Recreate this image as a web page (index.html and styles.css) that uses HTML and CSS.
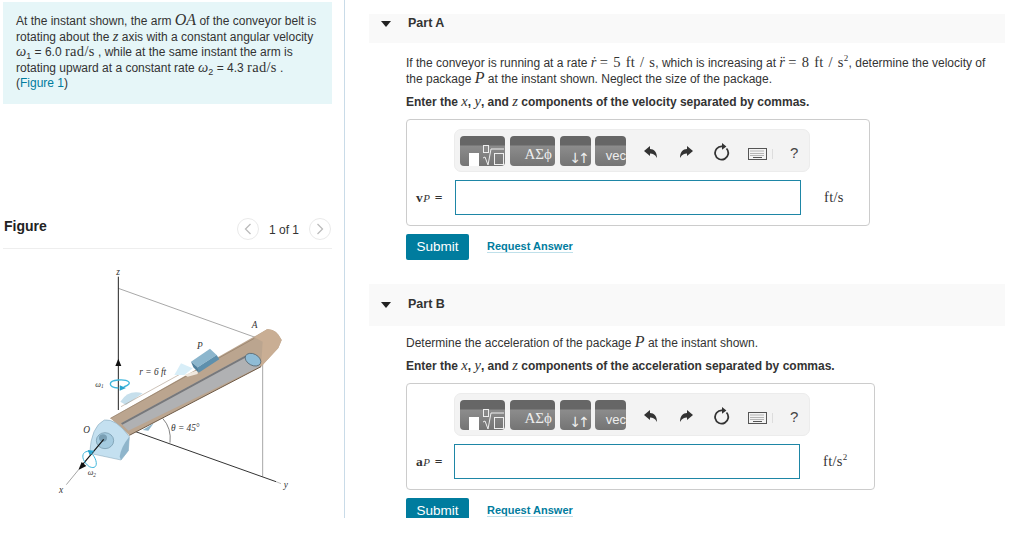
FILE: index.html
```html
<!DOCTYPE html>
<html lang="en">
<head>
    <meta charset="UTF-8">
    <title>Conveyor belt problem</title>
    <link rel="stylesheet" href="styles.css">
</head>
<body>
    <div class="page">
        <div class="left-col">
            <div class="intro">
                At the instant shown, the arm <span class="mi big">OA</span> of the conveyor belt is<br>
                rotating about the <span class="mi">z</span> axis with a constant angular velocity<br>
                <span class="mi">ω</span><sub>1</sub> = 6.0 <span class="mt">rad/s</span> , while at the same instant the arm is<br>
                rotating upward at a constant rate <span class="mi">ω</span><sub>2</sub> = 4.3 <span class="mt">rad/s</span> .<br>
                (<a class="fig-link" href="#">Figure 1</a>)
            </div>
            <div class="figure-head">
                <span class="figure-title">Figure</span>
                <div class="pager">
                    <span class="pager-btn">
                        <svg width="8" height="12" viewBox="0 0 8 12"><path d="M6.5 1 L1.5 6 L6.5 11" fill="none" stroke="#bbb" stroke-width="1.3"/></svg>
                    </span>
                    <span class="pager-text">1 of 1</span>
                    <span class="pager-btn">
                        <svg width="8" height="12" viewBox="0 0 8 12"><path d="M1.5 1 L6.5 6 L1.5 11" fill="none" stroke="#bbb" stroke-width="1.3"/></svg>
                    </span>
                </div>
            </div>
            <svg class="figure-img" width="270" height="240" viewBox="0 0 810 720">
                <!-- axes -->
                <path d="M232 85 L665 240 L665 650" fill="none" stroke="#a8a8a8" stroke-width="3"/>
                <path d="M232 50 V450" stroke="#222" stroke-width="3"/>
                <path d="M232 296 L223 318 H241 Z" fill="#111"/>
                <path d="M270 510 L705 665" stroke="#333" stroke-width="3"/>
                <path d="M705 665 L720 671" stroke="#999" stroke-width="2"/>
                <path d="M365 475 Q392 505 387 548" fill="none" stroke="#444" stroke-width="2"/>
                <!-- blue mounts behind the belt -->
                <path d="M238 425 Q262 388 305 400 L255 435 Z" fill="#c6dfec"/>
                <path d="M305 510 L338 490 L322 512 Z" fill="#8fb6cb"/>
                <!-- belt -->
                <path d="M208 475 L678 208 Q705 205 722 240 L712 264 L660 320 L265 526 Z" fill="#bba58f"/>
                <path d="M640 232 L678 208 Q705 205 722 240 L712 264 L660 320 L665 245 Z" fill="#c9ae94"/>
                <path d="M240 490 L612 287 L660 318 L262 512 Z" fill="#b0b1b3"/>
                <path d="M240 490 L612 287 L617 291 L244 494 Z" fill="#77787b"/>
                <path d="M208 475 L640 235" stroke="#8f7a65" stroke-width="2"/>
                <path d="M265 526 L660 320" stroke="#6e5a47" stroke-width="3"/>
                <path d="M240 440 L440 330" stroke="#9a8570" stroke-width="1.5"/>
                <ellipse cx="636" cy="299" rx="25" ry="17" transform="rotate(28 636 299)" fill="#8fbcd6" stroke="#4b5a63" stroke-width="2"/>
                <!-- package -->
                <path d="M420 310 L455 325 L430 345 L400 345 Z" fill="#d8eef8"/>
                <path d="M430 345 L470 330 L470 342 L440 350 Z" fill="#efe8df"/>
                <path d="M450 305 L507 266 L527 285 L470 322 Z" fill="#8cb6cd"/>
                <path d="M470 322 L527 285 L535 298 L473 338 Z" fill="#5e90ad"/>
                <path d="M450 305 L470 322 L473 338 L457 322 Z" fill="#4f7f9c"/>
                <!-- front bearing -->
                <path d="M146 580 Q150 500 190 480 Q225 475 265 530 L262 572 L240 600 Z" fill="#c4e0f0" stroke="#7d9fb2" stroke-width="1.5"/>
                <path d="M240 600 L262 572 L265 530 Q240 560 236 590 Z" fill="#8fb5cb"/>
                <ellipse cx="192" cy="542" rx="26" ry="24" fill="#a5cbe0" stroke="#6d8fa3" stroke-width="2"/>
                <ellipse cx="186" cy="534" rx="12" ry="11" fill="#7a9fb4"/>
                <!-- x axis -->
                <path d="M188 538 L122 617" stroke="#111" stroke-width="3.5"/>
                <path d="M112 630 L122 606 L136 618 Z" fill="#111"/>
                <path d="M112 630 L76 674" stroke="#777" stroke-width="2"/>
                <!-- rotation arrows -->
                <path d="M248 381 C280 370 262 358 232 360 C200 362 200 382 232 384" fill="none" stroke="#3fb6dc" stroke-width="4"/>
                <path d="M255 384 L236 376 V392 Z" fill="#2aa5cf"/>
                <path d="M145 574 C120 572 118 600 145 620 C172 632 172 600 150 578" fill="none" stroke="#3fb6dc" stroke-width="3"/>
                <path d="M160 572 L140 570 L146 586 Z" fill="#2aa5cf"/>
                <!-- labels -->
                <text class="fig-label" x="226" y="46">z</text>
                <text class="fig-label" x="632" y="204">A</text>
                <text class="fig-label" x="468" y="268">P</text>
                <text class="fig-label" x="295" y="345">r = 6 ft</text>
                <text class="fig-label" x="390" y="514">θ = 45°</text>
                <text class="fig-label fig-small" x="163" y="380">ω<tspan class="fig-sub" dy="5">1</tspan></text>
                <text class="fig-label fig-small" x="140" y="646">ω<tspan class="fig-sub" dy="5">2</tspan></text>
                <text class="fig-label" x="127" y="518">O</text>
                <text class="fig-label" x="54" y="698">x</text>
                <text class="fig-label" x="728" y="684">y</text>
            </svg>
        </div>

        <div class="right-col">
            <div class="part-bar part-bar-a">
                <span class="caret"></span>
                <span class="part-title">Part A</span>
            </div>
            <p class="part-text part-text-a">
                If the conveyor is running at a rate <span class="mi">ṙ</span> <span class="mt eq">= 5 ft / s</span>, which is increasing at <span class="mi">r̈</span> <span class="mt eq">= 8 ft / s<sup>2</sup></span>, determine the velocity of<br>
                the package <span class="mi big">P</span> at the instant shown. Neglect the size of the package.
            </p>
            <p class="part-text part-bold">
                Enter the <span class="mi normal">x</span>, <span class="mi normal">y</span>, and <span class="mi normal">z</span> components of the velocity separated by commas.
            </p>
            <div class="answer-box">
                <div class="toolbar">
                    <span class="tool-btn tool-math">
                        <span class="white-box"></span>
                        <svg width="24" height="21" viewBox="0 0 24 21"><path d="M2 13 L4 12 L7 20 L10 4 H23" fill="none" stroke="#eee" stroke-width="1"/><rect x="2.5" y="0.5" width="5" height="7" fill="none" stroke="#eee"/><rect x="13.5" y="8.5" width="9" height="11" fill="none" stroke="#eee"/></svg>
                    </span>
                    <span class="tool-btn tool-greek">ΑΣϕ</span>
                    <span class="tool-btn tool-arrows">↓↑</span>
                    <span class="tool-btn tool-vec">vec</span>
                    <svg class="tool-icon icon-undo" width="16" height="16" viewBox="0 0 16 16"><path d="M1 7 L7 2 V5 C11 5 14 8 14 14 C12 10.5 10 9.5 7 9.5 V12 Z" fill="#333"/></svg>
                    <svg class="tool-icon icon-redo" width="16" height="16" viewBox="0 0 16 16"><path d="M15 7 L9 2 V5 C5 5 2 8 2 14 C4 10.5 6 9.5 9 9.5 V12 Z" fill="#333"/></svg>
                    <svg class="tool-icon icon-reload" width="18" height="18" viewBox="0 0 18 18"><path d="M13.5 5.5 A6.6 6.6 0 1 1 9 3.4" fill="none" stroke="#333" stroke-width="1.8"/><path d="M9 0 L13.4 3.4 L9 6.8 Z" fill="#333"/></svg>
                    <svg class="tool-icon icon-keys" width="19" height="12" viewBox="0 0 19 12"><rect x="0.5" y="0.5" width="18" height="11" fill="#f3f3f3" stroke="#555"/><path d="M2.5 3 H16.5 M2.5 5.5 H16.5 M2.5 7.5 H16.5" stroke="#777" stroke-dasharray="1 1"/><path d="M5 9.5 H14" stroke="#555"/></svg>
                    <span class="tool-sep"></span>
                    <span class="tool-help">?</span>
                </div>
                <div class="answer-row">
                    <span class="answer-label"><b>v</b><i>P</i> <b>=</b></span>
                    <span class="answer-input"></span>
                    <span class="answer-unit">ft/s</span>
                </div>
            </div>
            <div class="actions">
                <span class="submit-btn">Submit</span>
                <a class="request-link" href="#">Request Answer</a>
            </div>

            <div class="part-bar part-bar-b">
                <span class="caret"></span>
                <span class="part-title">Part B</span>
            </div>
            <p class="part-text part-text-b">
                Determine the acceleration of the package <span class="mi big">P</span> at the instant shown.
            </p>
            <p class="part-text part-bold part-bold-b">
                Enter the <span class="mi normal">x</span>, <span class="mi normal">y</span>, and <span class="mi normal">z</span> components of the acceleration separated by commas.
            </p>
            <div class="answer-box answer-box-b">
                <div class="toolbar">
                    <span class="tool-btn tool-math">
                        <span class="white-box"></span>
                        <svg width="24" height="21" viewBox="0 0 24 21"><path d="M2 13 L4 12 L7 20 L10 4 H23" fill="none" stroke="#eee" stroke-width="1"/><rect x="2.5" y="0.5" width="5" height="7" fill="none" stroke="#eee"/><rect x="13.5" y="8.5" width="9" height="11" fill="none" stroke="#eee"/></svg>
                    </span>
                    <span class="tool-btn tool-greek">ΑΣϕ</span>
                    <span class="tool-btn tool-arrows">↓↑</span>
                    <span class="tool-btn tool-vec">vec</span>
                    <svg class="tool-icon icon-undo" width="16" height="16" viewBox="0 0 16 16"><path d="M1 7 L7 2 V5 C11 5 14 8 14 14 C12 10.5 10 9.5 7 9.5 V12 Z" fill="#333"/></svg>
                    <svg class="tool-icon icon-redo" width="16" height="16" viewBox="0 0 16 16"><path d="M15 7 L9 2 V5 C5 5 2 8 2 14 C4 10.5 6 9.5 9 9.5 V12 Z" fill="#333"/></svg>
                    <svg class="tool-icon icon-reload" width="18" height="18" viewBox="0 0 18 18"><path d="M13.5 5.5 A6.6 6.6 0 1 1 9 3.4" fill="none" stroke="#333" stroke-width="1.8"/><path d="M9 0 L13.4 3.4 L9 6.8 Z" fill="#333"/></svg>
                    <svg class="tool-icon icon-keys" width="19" height="12" viewBox="0 0 19 12"><rect x="0.5" y="0.5" width="18" height="11" fill="#f3f3f3" stroke="#555"/><path d="M2.5 3 H16.5 M2.5 5.5 H16.5 M2.5 7.5 H16.5" stroke="#777" stroke-dasharray="1 1"/><path d="M5 9.5 H14" stroke="#555"/></svg>
                    <span class="tool-sep"></span>
                    <span class="tool-help">?</span>
                </div>
                <div class="answer-row">
                    <span class="answer-label"><b>a</b><i>P</i> <b>=</b></span>
                    <span class="answer-input"></span>
                    <span class="answer-unit">ft/s<sup>2</sup></span>
                </div>
            </div>
            <div class="actions">
                <span class="submit-btn">Submit</span>
                <a class="request-link" href="#">Request Answer</a>
            </div>
        </div>
    </div>
</body>
</html>
```

FILE: styles.css
```css
html, body {
    margin: 0;
    background: white;
}
body {
    font-family: "Liberation Sans", Arial, sans-serif;
    font-size: 12px;
    color: #333;
}
.page {
    display: flex;
    height: 518px;
    overflow: hidden;
}
.left-col {
    width: 345px;
    flex: none;
    padding: 2px 12px 0 3px;
    box-sizing: border-box;
    border-right: 1px solid #c9dbe8;
}
.intro {
    height: 102px;
    box-sizing: border-box;
    padding: 12px 13px 0;
    background-color: #e6f6f8;
    line-height: 15.5px;
    white-space: nowrap;
}
.intro sub {
    font-size: 9px;
    line-height: 0;
}
.mi {
    font-family: "Liberation Serif", serif;
    font-style: italic;
    font-size: 14.5px;
    line-height: 0;
}
.mi.big {
    font-size: 16px;
}
.mi.normal {
    font-weight: normal;
}
.mt {
    font-family: "Liberation Serif", serif;
    font-size: 14.5px;
    letter-spacing: 0.3px;
    line-height: 0;
}
.eq {
    word-spacing: 1px;
}
sup {
    font-size: 9px;
    line-height: 0;
}
.fig-link {
    color: #007c9e;
    text-decoration: none;
}
.figure-head {
    display: flex;
    align-items: center;
    justify-content: space-between;
    height: 40px;
    margin-top: 105px;
    padding-top: 1px;
    padding-left: 1px;
    box-sizing: border-box;
    border-bottom: 1px solid #eee;
}
.figure-title {
    margin-bottom: 6px;
    font-size: 14px;
    font-weight: bold;
    color: #222;
}
.pager {
    display: flex;
    align-items: center;
    margin-right: 1px;
    gap: 10px;
}
.pager-btn {
    display: flex;
    align-items: center;
    justify-content: center;
    width: 22px;
    height: 22px;
    border: 1px solid #eaeaea;
    border-radius: 50%;
    box-sizing: border-box;
}
.pager-text {
    width: 30px;
    margin-top: 2px;
    font-size: 12px;
    text-align: center;
    white-space: nowrap;
}
.figure-img {
    display: block;
    margin: 11px 0 0 38px;
}
.fig-label {
    font-family: "Liberation Serif", serif;
    font-style: italic;
    font-size: 28px;
    fill: #333;
}
.fig-small {
    font-size: 24px;
}
.fig-sub {
    font-size: 16px;
}
.right-col {
    flex: 1;
    padding: 14px 19px 0 24px;
    min-width: 0;
}
.part-bar {
    display: flex;
    background-color: #f9f9f9;
    padding-left: 12px;
}
.part-bar-a {
    align-items: flex-start;
    padding-top: 1px;
    height: 29px;
    box-sizing: border-box;
}
.part-bar-b {
    align-items: center;
    height: 42px;
    margin-top: 24px;
}
.caret {
    width: 0;
    height: 0;
    border-left: 5px solid transparent;
    border-right: 5px solid transparent;
    border-top: 6px solid #222;
    margin-right: 17px;
}
.part-bar-a .caret {
    margin-top: 6px;
}
.part-bar-b .part-title {
    margin-bottom: 2px;
}
.part-title {
    font-size: 12.5px;
    font-weight: bold;
    line-height: 16px;
}
.part-text {
    margin: 7px 0 0 37px;
    line-height: 16px;
    white-space: nowrap;
}
.part-text-a {
    margin-top: 12px;
}
.part-text-b {
    margin-top: 9px;
}
.part-bold {
    font-weight: bold;
}
.part-bold-b {
    margin-top: 7px;
}
.answer-box {
    width: 464px;
    height: 107px;
    box-sizing: border-box;
    margin: 9px 0 0 37px;
    padding-top: 9px;
    border: 1px solid #ccc;
    border-radius: 4px;
}
.answer-box-b {
    width: 469px;
}
.toolbar {
    display: flex;
    align-items: center;
    width: 356px;
    height: 43px;
    box-sizing: border-box;
    margin-left: 47px;
    padding-left: 5px;
    background-color: #f3f3f3;
    border: 1px solid #ececec;
    border-radius: 7px;
}
.tool-btn {
    display: flex;
    align-items: flex-end;
    justify-content: flex-end;
    height: 30px;
    margin-right: 5px;
    flex: none;
    box-sizing: border-box;
    overflow: hidden;
    border-radius: 4px;
    color: #eee;
    background: linear-gradient(#666 0, #666 9px, #8c8c8c 10px, #747474 100%);
}
.tool-math {
    width: 45px;
    padding: 0 0 0 9px;
    justify-content: space-between;
}
.white-box {
    width: 10px;
    height: 13px;
    background: white;
}
.tool-greek {
    width: 45px;
    padding: 0 3px 3px 0;
    font-family: "Liberation Serif", serif;
    font-size: 15px;
}
.tool-arrows {
    width: 31px;
    margin-right: 4px;
    padding: 0 4px 0 0;
    font-family: "DejaVu Sans", sans-serif;
    font-size: 14px;
    letter-spacing: -3px;
}
.tool-vec {
    width: 31px;
    margin-right: 0;
    padding-bottom: 3px;
    font-size: 13px;
}
.tool-icon {
    flex: none;
    margin-top: 3px;
}
.icon-undo {
    margin-left: 17px;
}
.icon-redo {
    margin-left: 19px;
}
.icon-reload {
    margin-left: 19px;
}
.icon-keys {
    margin-left: 17px;
    margin-top: 6px;
}
.tool-sep {
    width: 1px;
    height: 10px;
    margin: 6px 0 0 5px;
    background: #ddd;
}
.tool-help {
    margin: 3px 0 0 17px;
    font-size: 15px;
    color: #444;
}
.answer-row {
    display: flex;
    align-items: center;
    margin-top: 8px;
    padding-left: 9px;
}
.answer-label {
    width: 39px;
    flex: none;
    box-sizing: border-box;
    font-family: "Liberation Serif", serif;
    font-size: 13.5px;
    letter-spacing: 0.6px;
}
.answer-label i {
    font-size: 11px;
}
.answer-box-b .answer-label {
    width: 38px;
}
.answer-input {
    display: block;
    width: 346px;
    height: 35px;
    box-sizing: border-box;
    border: 1px solid #1e86a6;
    background: white;
}
.answer-unit {
    margin-left: 23px;
    font-family: "Liberation Serif", serif;
    font-size: 14.5px;
    letter-spacing: 0.3px;
}
.actions {
    display: flex;
    align-items: center;
    margin: 8px 0 0 37px;
}
.submit-btn {
    width: 63px;
    height: 26px;
    line-height: 25px;
    text-align: center;
    background-color: #007c9e;
    color: white;
    font-size: 13.5px;
    border-radius: 2px;
}
.request-link {
    margin: 0 0 1px 18px;
    font-size: 11px;
    font-weight: bold;
    color: #007c9e;
    text-decoration: none;
    border-bottom: 1px solid #bfe0ea;
    line-height: 12px;
}
```
